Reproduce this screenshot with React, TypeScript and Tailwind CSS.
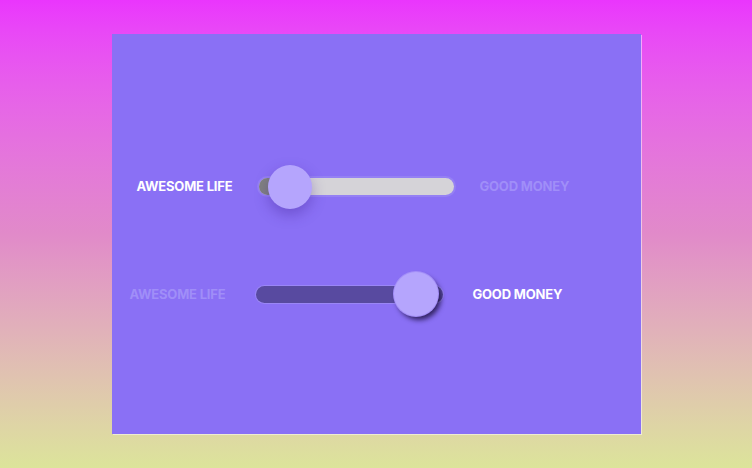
import React from 'react';

function Slider({ value, width, raised }: { value: number; width: number; raised?: boolean }) {
  // value 0..1, thumb position along the track
  return (
    <div className="relative h-[17px]" style={{ width }}>
      {raised ? (
        <div className="absolute inset-0 rounded-full bg-[#584aa0] ring-1 ring-[#9a86f6]" />
      ) : (
        <div className="absolute inset-0 overflow-hidden rounded-full bg-[#d5d3d8] ring-2 ring-[#9580f4]">
          <div className="h-full bg-[#808080]" style={{ width: `${value * 100}%` }} />
        </div>
      )}
      <div
        className={
          raised
            ? 'absolute top-1/2 h-[44px] w-[44px] -translate-x-1/2 -translate-y-1/2 rounded-full bg-[#b5a5fd] shadow-[3px_4px_5px_rgba(20,10,50,0.75)] ring-1 ring-[#a48ff8]'
            : 'absolute top-1/2 h-[44px] w-[44px] -translate-x-1/2 -translate-y-1/2 rounded-full bg-[#b5a5fd] shadow-[0_6px_14px_rgba(60,30,140,0.35)]'
        }
        style={{ left: `${value * 100}%` }}
      />
    </div>
  );
}

export default function App() {
  return (
    <div
      className="flex h-[468px] w-[752px] items-center justify-center bg-gradient-to-b from-[#ea35fd] via-[#e18ac9] to-[#dce49a]"
      style={{ fontFamily: 'Inter, "Noto Sans", sans-serif' }}
    >
      <div className="flex h-[400px] w-[529px] flex-col bg-[#8a70f5] shadow-[1px_1px_0_rgba(255,255,255,0.5)]">
        <div className="mt-[143px] ml-[25px] flex items-center">
          <span className="w-[97px] text-[13px] font-bold tracking-[-0.2px] text-white">AWESOME LIFE</span>
          <div className="ml-[25px]">
            <Slider value={0.16} width={195} />
          </div>
          <span className="ml-[26px] text-[13px] font-bold tracking-[-0.2px] text-[#a08ef8]">GOOD MONEY</span>
        </div>
        <div className="mt-[88px] ml-[18px] flex items-center">
          <span className="w-[97px] text-[13px] font-bold tracking-[-0.2px] text-[#a08ef8]">AWESOME LIFE</span>
          <div className="ml-[29px]">
            <Slider value={0.856} width={187} raised />
          </div>
          <span className="ml-[30px] text-[13px] font-bold tracking-[-0.2px] text-white">GOOD MONEY</span>
        </div>
      </div>
    </div>
  );
}
